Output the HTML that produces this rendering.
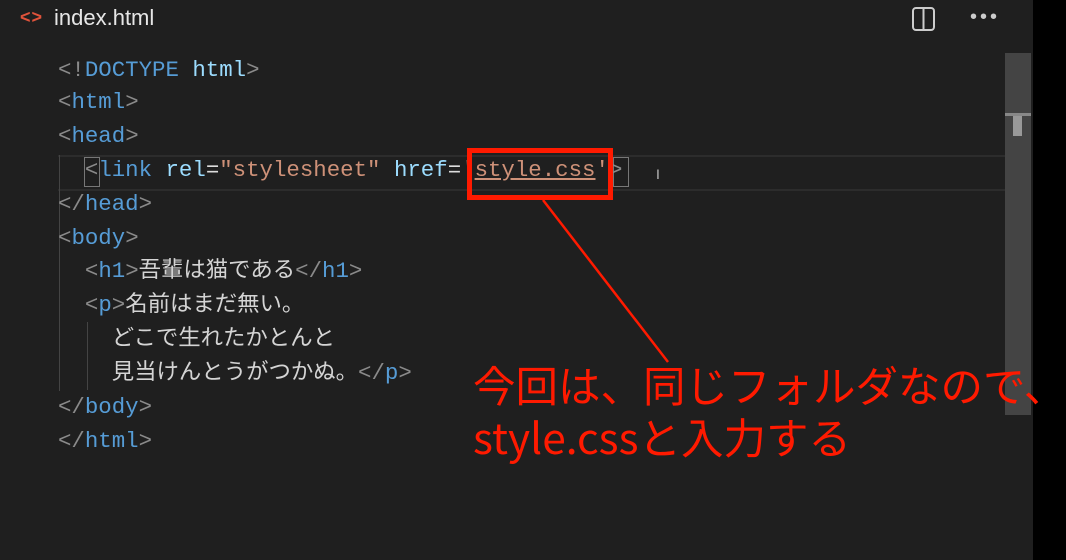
<!DOCTYPE html>
<html><head><meta charset="utf-8"><style>
body{margin:0;width:1066px;height:560px;background:#000;overflow:hidden;position:relative;font-family:"Liberation Sans","Noto Sans CJK JP",sans-serif}
#ed{position:absolute;left:0;top:0;width:1033px;height:560px;background:#1f1f1f}
.tab{position:absolute;left:54px;top:5px;font-size:22px;color:#e6e6e6}
.ic{position:absolute;left:20px;top:7px;color:#e0533b;font-size:18px;font-weight:bold;letter-spacing:1px}
.l{position:absolute;left:58px;font-family:"Liberation Mono","Noto Sans CJK JP",monospace;font-size:22.4px;line-height:34px;height:34px;white-space:pre;color:#d4d4d4}
.g{color:#8a8a8a}.t{color:#569cd6}.a{color:#9cdcfe}.s{color:#ce9178}.w{color:#ddd}
.cur{position:absolute;left:58px;top:155px;width:947px;height:32px;border-top:2px solid #2c2c2c;border-bottom:2px solid #2c2c2c}
.guide{position:absolute;width:1px;background:#444}
#box{position:absolute;left:467px;top:148px;width:136px;height:42px;border:5px solid #ff1a00}
.jp{position:absolute;left:473px;color:#ff1a00;font-size:42.5px;white-space:nowrap;font-family:"Noto Sans CJK JP",sans-serif;font-weight:400}
</style></head><body>
<div id="ed">
<div class="ic">&lt;&gt;</div>
<div class="tab">index.html</div>
<svg style="position:absolute;left:911px;top:6px" width="26" height="26"><rect x="2" y="2" width="21" height="22" rx="3" fill="none" stroke="#ccc" stroke-width="2"/><line x1="12.5" y1="2" x2="12.5" y2="24" stroke="#ccc" stroke-width="2"/></svg>
<div style="position:absolute;left:970px;top:12px;color:#ccc;font-size:20px;letter-spacing:3px;line-height:10px">•••</div>
<div style="position:absolute;left:1005px;top:53px;width:26px;height:362px;background:#444"></div>
<div style="position:absolute;left:1005px;top:113px;width:26px;height:3px;background:#888"></div>
<div style="position:absolute;left:1013px;top:116px;width:9px;height:20px;background:#999"></div>
<div class="cur"></div>
<div class="guide" style="left:59px;top:155px;height:236px"></div>
<div class="guide" style="left:87px;top:322px;height:68px"></div>
<div style="position:absolute;left:84px;top:157px;width:14px;height:28px;border:1px solid #777"></div>
<div style="position:absolute;left:613px;top:157px;width:14px;height:28px;border:1px solid #777"></div>
<div style="position:absolute;left:656px;top:166px;color:#bbb;font-size:14px">I</div>
<div class="l" style="top:53px"><span class="g">&lt;!</span><span class="t">DOCTYPE</span> <span class="a">html</span><span class="g">&gt;</span></div>
<div class="l" style="top:85px"><span class="g">&lt;</span><span class="t">html</span><span class="g">&gt;</span></div>
<div class="l" style="top:119px"><span class="g">&lt;</span><span class="t">head</span><span class="g">&gt;</span></div>
<div class="l" style="top:153px">  <span class="g">&lt;</span><span class="t">link</span> <span class="a">rel</span><span class="w">=</span><span class="s">"stylesheet"</span> <span class="a">href</span><span class="w">=</span><span class="s">'<u>style.css</u>'</span><span class="g">&gt;</span></div>
<div class="l" style="top:187px"><span class="g">&lt;/</span><span class="t">head</span><span class="g">&gt;</span></div>
<div class="l" style="top:221px"><span class="g">&lt;</span><span class="t">body</span><span class="g">&gt;</span></div>
<div class="l" style="top:254px">  <span class="g">&lt;</span><span class="t">h1</span><span class="g">&gt;</span>吾輩は猫である<span class="g">&lt;/</span><span class="t">h1</span><span class="g">&gt;</span></div>
<div class="l" style="top:288px">  <span class="g">&lt;</span><span class="t">p</span><span class="g">&gt;</span>名前はまだ無い。</div>
<div class="l" style="top:322px">    どこで生れたかとんと</div>
<div class="l" style="top:356px">    見当けんとうがつかぬ。<span class="g">&lt;/</span><span class="t">p</span><span class="g">&gt;</span></div>
<div class="l" style="top:390px"><span class="g">&lt;/</span><span class="t">body</span><span class="g">&gt;</span></div>
<div class="l" style="top:424px"><span class="g">&lt;/</span><span class="t">html</span><span class="g">&gt;</span></div>
</div>
<div id="box"></div>
<svg style="position:absolute;left:0;top:0" width="1066" height="560"><line x1="543" y1="200" x2="668" y2="362" stroke="#ff1a00" stroke-width="2.5"/></svg>
<div class="jp" style="top:354px">今回は、同じフォルダなので、</div>
<div class="jp" style="top:406px">style.cssと入力する</div>
</body></html>
